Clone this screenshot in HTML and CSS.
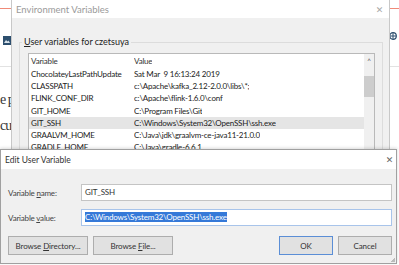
FILE: index.html
```html
<!DOCTYPE html>
<html lang="en">
<head>
  <meta charset="UTF-8" />
  <title>Environment Variables</title>
  <link rel="stylesheet" href="styles.css">
</head>
<body>
  <div class="desktop">
    <!-- page behind the dialogs -->
    <div class="page">
      <div class="page-accent"></div>
      <svg class="page-icon" width="8" height="9" viewBox="0 0 8 9">
        <rect width="8" height="9" fill="#2d4f6e"/>
        <path d="M1 7 L3 4 L4.5 5.5 L5.5 4.5 L7 7 Z" fill="#d8e2ea"/>
      </svg>
      <div class="page-rule"></div>
      <div class="page-text page-text-1">e p</div>
      <div class="page-text page-text-2">cu</div>
      <svg class="page-globe" width="8" height="10" viewBox="0 0 8 10">
        <circle cx="4" cy="5" r="3.3" fill="none" stroke="#2d4f6e" stroke-width="1.2"/>
        <line x1="0.7" y1="5" x2="7.3" y2="5" stroke="#2d4f6e" stroke-width="1"/>
        <line x1="4" y1="1.7" x2="4" y2="8.3" stroke="#2d4f6e" stroke-width="1"/>
      </svg>
    </div>

    <div class="window env">
      <div class="titlebar">
        <span class="title">Environment Variables</span>
        <span class="close">✕</span>
      </div>
      <div class="win-body">
        <div class="group">
          <div class="legend"><u>U</u>ser variables for czetsuya</div>
          <div class="list">
            <div class="list-main">
              <div class="row head"><span class="col-var">Variable</span><span class="col-val">Value</span></div>
              <div class="row"><span class="col-var">ChocolateyLastPathUpdate</span><span class="col-val">Sat Mar&nbsp; 9 16:13:24 2019</span></div>
              <div class="row"><span class="col-var">CLASSPATH</span><span class="col-val">c:\Apache\kafka_2.12-2.0.0\libs\*;</span></div>
              <div class="row"><span class="col-var">FLINK_CONF_DIR</span><span class="col-val">c:\Apache\flink-1.6.0\conf</span></div>
              <div class="row"><span class="col-var">GIT_HOME</span><span class="col-val">C:\Program Files\Git</span></div>
              <div class="row selected"><span class="col-var">GIT_SSH</span><span class="col-val">C:\Windows\System32\OpenSSH\ssh.exe</span></div>
              <div class="row"><span class="col-var">GRAALVM_HOME</span><span class="col-val">C:\Java\jdk\graalvm-ce-java11-21.0.0</span></div>
              <div class="row"><span class="col-var">GRADLE_HOME</span><span class="col-val">C:\Java\gradle-6.6.1</span></div>
            </div>
            <div class="scrollbar">
              <div class="arrow">˄</div>
              <div class="thumb"></div>
            </div>
          </div>
        </div>
      </div>
    </div>

    <div class="window edit">
      <div class="titlebar">
        <span class="title">Edit User Variable</span>
        <span class="close">✕</span>
      </div>
      <div class="win-body">
        <div class="field">
          <label>Variable <u>n</u>ame:</label>
          <div class="input">GIT_SSH</div>
        </div>
        <div class="field">
          <label>Variable <u>v</u>alue:</label>
          <div class="input focused"><span class="sel">C:\Windows\System32\OpenSSH\ssh.exe</span></div>
        </div>
        <div class="buttons">
          <button class="btn wide">Browse <u>D</u>irectory...</button>
          <button class="btn wide">Browse <u>F</u>ile...</button>
          <span class="spacer"></span>
          <button class="btn small default">OK</button>
          <button class="btn small">Cancel</button>
        </div>
      </div>
      <div class="grip"></div>
    </div>
  </div>
</body>
</html>
```

FILE: styles.css
```css
body {
  margin: 0;
  font-family: Lato, "Noto Sans", sans-serif;
  font-size: 8px;
  letter-spacing: -0.2px;
  color: #1a1a1a;
  background: #fff;
}
.desktop {
  position: relative;
  width: 399px;
  height: 265px;
  overflow: hidden;
  background: #fff;
}

/* page behind */
.page-accent {
  position: absolute;
  top: 8px;
  left: 0;
  width: 399px;
  height: 1px;
  background: #f08a78;
}
.page-icon {
  position: absolute;
  top: 36px;
  left: 3px;
}
.page-rule {
  position: absolute;
  top: 66px;
  left: 0;
  width: 399px;
  height: 1px;
  background: #e2e2e2;
}
.page-text {
  position: absolute;
  left: 0;
  font-family: "Liberation Serif", serif;
  font-size: 14px;
  color: #333;
  letter-spacing: -1px;
}
.page-text-1 { top: 92px; }
.page-text-2 { top: 118px; }
.page-globe {
  position: absolute;
  top: 31px;
  left: 389px;
}

/* windows */
.window {
  position: absolute;
  background: #f0f0f0;
  display: flex;
  flex-direction: column;
  overflow: hidden;
}
.titlebar {
  background: #fff;
  display: flex;
  flex-shrink: 0;
  align-items: center;
  justify-content: space-between;
}
.title {
  color: #9a9a9a;
  font-size: 9px;
  letter-spacing: 0;
}
.close {
  color: #a8a8a8;
  font-size: 9px;
  font-family: "DejaVu Sans", sans-serif;
}

.env {
  left: 11px;
  top: 0;
  width: 377px;
  height: 160px;
  border-left: 1px solid #c8c8c8;
  border-right: 1px solid #c8c8c8;
}
.env .titlebar {
  height: 17px;
  padding: 1px 6px 0 4px;
}
.env .title {
  font-size: 9.5px;
}
.env .win-body {
  padding: 24px 6px 0 7px;
}
.group {
  border: 1px solid #dcdcdc;
  border-bottom: none;
  position: relative;
  padding: 10px 7px 0 8px;
  height: 140px;
}
.legend {
  position: absolute;
  top: -7px;
  left: 2px;
  padding: 0 2px;
  background: #f0f0f0;
  color: #222;
  font-size: 9px;
  letter-spacing: 0;
}
.list {
  display: flex;
  background: #fff;
  border: 1px solid #b9b9b9;
  height: 140px;
}
.list-main {
  flex: 1;
  padding-top: 1px;
}
.row {
  display: flex;
  height: 12.2px;
  line-height: 12.2px;
  white-space: nowrap;
  color: #222;
}
.row.head {
  height: 13px;
  color: #333;
}
.row.selected {
  background: #e5e5e5;
}
.col-var {
  width: 103px;
  padding-left: 2px;
  flex-shrink: 0;
}
.col-val {
  overflow: hidden;
}
.scrollbar {
  width: 10px;
  background: #f0f0f0;
  display: flex;
  flex-direction: column;
  align-items: center;
}
.arrow {
  height: 14px;
  line-height: 14px;
  font-size: 8px;
  color: #606060;
}
.thumb {
  margin-top: 8px;
  width: 10px;
  height: 21px;
  background: #cdcdcd;
}

.edit {
  left: 0;
  top: 149px;
  width: 395px;
  height: 113px;
  border: 1px solid #a0a0a0;
  box-shadow: 0 -1px 3px rgba(0, 0, 0, 0.15);
}
.edit .titlebar {
  height: 19px;
  padding: 0 3px 0 4px;
}
.edit .title {
  color: #333;
  font-size: 8.5px;
}
.edit .close {
  color: #666;
}
.edit .win-body {
  padding: 15px 4px 0 7px;
  display: flex;
  flex-direction: column;
}
.field {
  display: flex;
  align-items: center;
  margin-bottom: 8px;
}
.field label {
  width: 73px;
  color: #444;
}
.input {
  flex: 1;
  height: 15px;
  line-height: 15px;
  background: #fff;
  border: 1px solid #c4c4c4;
  padding-left: 3px;
  color: #333;
  white-space: nowrap;
}
.input.focused {
  border-color: #a8c4ea;
}
.sel {
  background: #3579d8;
  color: #fff;
}
.buttons {
  display: flex;
  margin-top: 2px;
  gap: 5px;
}
.btn {
  font-family: Lato, "Noto Sans", sans-serif;
  font-size: 8px;
  letter-spacing: -0.1px;
  color: #333;
  height: 19px;
  background: #e1e1e1;
  border: 1px solid #adadad;
  padding: 0;
  white-space: nowrap;
}
.btn.wide {
  width: 80px;
}
.btn.small {
  width: 54px;
}
.btn.default {
  border-color: #5b8ed6;
}
.spacer {
  flex: 1;
}
.grip {
  position: absolute;
  right: 1px;
  bottom: 1px;
  width: 4px;
  height: 4px;
  background: linear-gradient(135deg, transparent 50%, #bbb 50%);
}
```
